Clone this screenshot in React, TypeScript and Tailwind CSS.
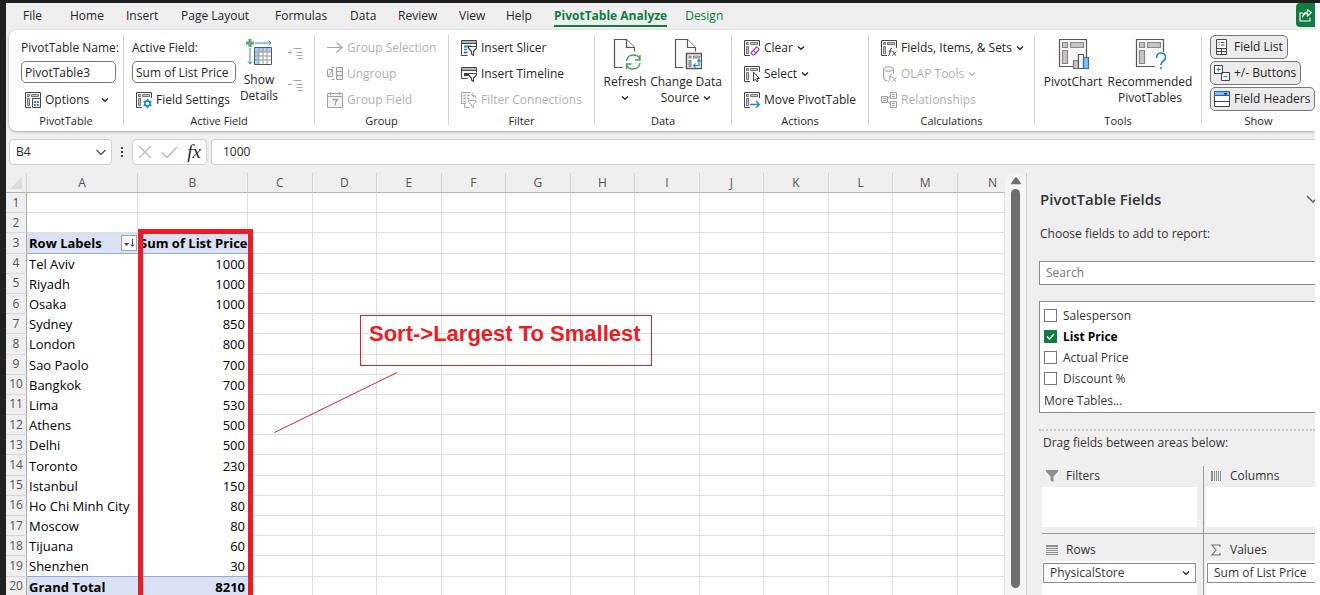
import React from "react";

type Kids = { children?: React.ReactNode };

const tabs = [
  { label: "File", cls: "w-[47px]" },
  { label: "Home", cls: "w-[56px]" },
  { label: "Insert", cls: "w-[55px]" },
  { label: "Page Layout", cls: "w-[94px]" },
  { label: "Formulas", cls: "w-[75px]" },
  { label: "Data", cls: "w-[48px]" },
  { label: "Review", cls: "w-[61px]" },
  { label: "View", cls: "w-[47px]" },
  { label: "Help", cls: "w-[48px]" },
];

const columns = ["C", "D", "E", "F", "G", "H", "I", "J", "K", "L", "M"];

const rows: [string, string][] = [
  ["", ""],
  ["", ""],
  ["Row Labels", "Sum of List Price"],
  ["Tel Aviv", "1000"],
  ["Riyadh", "1000"],
  ["Osaka", "1000"],
  ["Sydney", "850"],
  ["London", "800"],
  ["Sao Paolo", "700"],
  ["Bangkok", "700"],
  ["Lima", "530"],
  ["Athens", "500"],
  ["Delhi", "500"],
  ["Toronto", "230"],
  ["Istanbul", "150"],
  ["Ho Chi Minh City", "80"],
  ["Moscow", "80"],
  ["Tijuana", "60"],
  ["Shenzhen", "30"],
  ["Grand Total", "8210"],
];

const fields = [
  { name: "Salesperson", on: false },
  { name: "List Price", on: true },
  { name: "Actual Price", on: false },
  { name: "Discount %", on: false },
];

function Chevron({ className = "" }: { className?: string }) {
  return (
    <svg className={"h-2 w-2 shrink-0 " + className} viewBox="0 0 8 8" fill="none" stroke="currentColor" strokeWidth="1.3">
      <path d="M1 2.5 4 5.3 7 2.5" />
    </svg>
  );
}

function Icon({ children }: Kids) {
  return (
    <svg className="h-4 w-4 shrink-0" viewBox="0 0 16 16" fill="none" stroke="#444" strokeWidth="1" aria-hidden="true">
      {children}
    </svg>
  );
}

function PivotBase() {
  return (
    <>
      <path d="M6 15.5H.5V.5h15V6" fill="#fafafa" />
      <path d="M2.5 2.5h2v2h-2zM6.5 2.5h7v2h-7zM2.5 6.5h2v7h-2z" fill="#c8c6c4" stroke="#777" />
    </>
  );
}

const OptionsIcon = () => (
  <Icon>
    <PivotBase />
    <path d="M7.5 6.5h8v9h-8z" fill="#fff" />
    <path d="M9 9h2v2H9zM12 9h2v2h-2zM9 12h2v2H9zM12 12h2v2h-2z" fill="#1e88d8" stroke="none" />
  </Icon>
);
const SettingsIcon = () => (
  <Icon>
    <PivotBase />
    <circle cx="11.5" cy="11.5" r="2.6" fill="#fff" stroke="#1e88d8" strokeWidth="1.6" />
    <path d="M11.5 7v2M11.5 14v2M7.6 9.2l1.8 1M13.6 12.8l1.8 1M7.6 13.8l1.8-1M13.6 10.2l1.8-1" stroke="#1e88d8" strokeWidth="1.8" />
  </Icon>
);
const ClearIcon = () => (
  <Icon>
    <PivotBase />
    <path d="M7.5 12.2 12 7.6q.8-.7 1.6 0l1 1q.7.8 0 1.6L10.2 14.8q-.7.6-1.4 0L7.5 13.6q-.6-.7 0-1.4z" fill="#fff" stroke="#a43db0" strokeWidth="1.3" />
    <path d="m9.4 10.4 2.8 2.8" stroke="#a43db0" strokeWidth="1.2" />
  </Icon>
);
const SelectIcon = () => (
  <Icon>
    <PivotBase />
    <path d="M9.5 6v9l2-2 1.4 2.8 1.3-.7-1.3-2.6h2.6z" fill="#fff" />
  </Icon>
);
const MoveIcon = () => (
  <Icon>
    <PivotBase />
    <path d="M6 12.5h9M12 9l3.3 3.5L12 16" stroke="#1e88d8" strokeWidth="1.3" />
  </Icon>
);
const Fx = () => (
  <path d="M7 15.5q1.2.3 1.5-1.2l1-4.8q.3-1.5 1.7-1.2M7.8 11h3M11.3 11.5q1-.6 1.4.6l.8 2.4q.4 1.2 1.5.5M15.5 11.4l-4.3 4" />
);
const FieldsIcon = () => (
  <Icon>
    <PivotBase />
    <path d="M8 6.5h7.5V15H8z" fill="#fff" stroke="none" />
    <Fx />
    <path d="M15.5 1v7" />
  </Icon>
);
const OlapIcon = () => (
  <Icon>
    <g stroke="#a6a6a6">
      <path d="M2.5 3v9.5q0 2 4 2.5M12.5 3v5" fill="#eee" />
      <ellipse cx="7.5" cy="3" rx="5" ry="2.3" fill="#eee" />
      <Fx />
    </g>
  </Icon>
);
const RelationIcon = () => (
  <Icon>
    <g stroke="#a0a0a0">
      <path d="M.5 4.5h6v6h-6zM9.5.5h6v6h-6zM9.5 9.5h6v6h-6z" fill="#f4f4f4" />
      <path d="M2 6.5h3M2 8.5h3M11 2.5h3M11 4.5h3M11 11.5h3M11 13.5h3M6.5 6.5 9.5 4M6.5 9.5l3 2.5" />
    </g>
  </Icon>
);
const ArrowIcon = () => (
  <Icon>
    <path d="M0 7.5h15M9.500 2.500l5.500 5-5.500 5" stroke="#a6a6a6" strokeWidth="1.2" />
  </Icon>
);
const UngroupIcon = () => (
  <Icon>
    <g stroke="#a0a0a0">
      <path d="M.5 3.500h5v7h-5zM1 10l4.500-6M7.500 1.500h-3M7.500 13.500h-3" />
      <path d="M9.500 1.500h6v12h-6zM9.500 5.500h6M9.500 9.500h6" fill="#eee" />
    </g>
  </Icon>
);
const CalendarIcon = () => (
  <Icon>
    <g stroke="#a0a0a0">
      <path d="M.5 1.500h15v14H.5z" fill="#f4f4f4" />
      <path d="M.5 4.500h15M3.500 0v3M12.500 0v3" />
      <path d="M5.500 7.500h5q-2.500 2.500-2.500 6" strokeWidth="1.3" />
    </g>
  </Icon>
);
const SlicerIcon = () => (
  <Icon>
    <path d="M6.500 15.500H.5V.5h15V6" fill="#fff" />
    <path d="M1 1h14v2.500H1z" fill="#b5b3b1" stroke="none" />
    <path d="M.5 3.500h15" />
    <path d="M3 6.500h7" stroke="#1e88d8" strokeWidth="2" />
    <path d="M3 9.500h3" stroke="#1e88d8" strokeWidth="1.5" />
    <path d="M3 12.500h3.500" strokeWidth="1.5" />
    <path d="M7.500 6.500h8v1.500l-3 3.500v4l-2-1.500v-2.500l-3-3.500z" fill="#fff" strokeWidth="1.2" />
  </Icon>
);
const TimelineIcon = () => (
  <Icon>
    <path d="M6.500 12.500h-6v-11h15v5" fill="#fff" />
    <path d="M1 2h14v2.500H1z" fill="#b5b3b1" stroke="none" />
    <path d="M.5 4.500h15" />
    <path d="M3 8.500h4" strokeWidth="3" />
    <path d="M7.500 7.500h8V9l-3 3v3.500l-2-1.500v-2l-3-3z" fill="#fff" strokeWidth="1.2" />
  </Icon>
);
const ConnectionsIcon = () => (
  <Icon>
    <g stroke="#a6a6a6">
      <path d="M5 11.500H.5V.5h9M3.500 12v3.500h5" fill="#f2f2f2" />
      <path d="M2.500 3.500h2M6.500 3.500h2M2.500 6.500h2M2.500 9.500h2M6.500 6.500h2" strokeWidth="1.4" />
      <path d="M15 6q0-3-4-3M12.500.8 10.500 3l2.500 2" />
      <path d="M7.500 8.500h7.500v1.500l-2.800 2.500v3l-1.900-1.200v-1.800l-2.800-2.500z" fill="#fff" />
    </g>
  </Icon>
);
const FieldListIcon = () => (
  <Icon>
    <path d="M2.500.5h10v15h-10z" fill="#fff" />
    <path d="M2.500 9.500h10M2.500 12.500h10M7.500 9.500v6" />
    <path d="M4.500 3.500h1M4.500 6h1M7 3.500h3.500M7 6h3.500" />
  </Icon>
);
const ButtonsIcon = () => (
  <Icon>
    <path d="M.5.5h8v8h-8zM7.500 7.500h8v8h-8z" fill="#fff" />
    <path d="M2.500 4.500h4M4.500 2.500v4M9.500 11.500h4" stroke="#1e88d8" strokeWidth="1.2" />
  </Icon>
);
const HeadersIcon = () => (
  <Icon>
    <path d="M.5.5h15v15H.5z" fill="#fff" />
    <path d="M.5.5h15v4H.5z" fill="#83beec" stroke="#1565a8" />
    <path d="M.5 10.500h15" />
    <path d="M9.500 2h4l-2 2.200z" fill="#222" stroke="none" />
  </Icon>
);

function BigIcon({ children }: Kids) {
  return (
    <svg className="h-8 w-8 shrink-0" viewBox="0 0 32 32" fill="none" stroke="#555" strokeWidth="1.2" aria-hidden="true">
      {children}
    </svg>
  );
}
const Page = () => (
  <>
    <path d="M13.500 29.500h-8v-28h12l8 8v4" fill="#fafafa" />
    <path d="M17.500 1.500v8h8" fill="#fff" />
  </>
);
const BigPivot = () => (
  <>
    <path d="M2.500 1.500h27v27h-27z" fill="#fafafa" />
    <path d="M5.500 4.500h5v5h-5zM13.500 4.500h13v5h-13zM5.500 12.500h5v13h-5z" fill="#c8c6c4" stroke="#888" />
  </>
);

function Cmd({ icon, label, menu, off }: { icon: React.ReactNode; label: string; menu?: boolean; off?: boolean }) {
  return (
    <button
      type="button"
      disabled={off}
      className={"flex h-[26px] items-center gap-1 whitespace-nowrap " + (off ? "text-[#b1b1b1]" : "text-[#262626]")}
    >
      {icon}
      <span>{label}</span>
      {menu && <Chevron />}
    </button>
  );
}

function Group({ label, className, body, last }: { label: string; className: string; body: React.ReactNode; last?: boolean }) {
  return (
    <>
      <section aria-label={label} className={"flex shrink-0 flex-col " + className}>
        <div className="flex h-[78px]">{body}</div>
        <div className="text-center text-[11px] leading-[15px]">{label}</div>
      </section>
      {!last && <div className="h-[90px] w-px shrink-0 bg-[#d4d4d4]" />}
    </>
  );
}

function Toggle({ icon, label }: { icon: React.ReactNode; label: string }) {
  return (
    <button type="button" aria-pressed="true" className="flex h-6 items-center gap-1 whitespace-nowrap rounded-[5px] border border-[#777] bg-[#ebebeb] pr-1 pl-[3px]">
      {icon}
      {label}
    </button>
  );
}

function Ribbon() {
  return (
    <div className="ml-[3px] flex h-[101px] shrink-0 overflow-hidden rounded-l-lg bg-white pt-[5px] text-[#262626] shadow-[0_1px_3px_rgba(0,0,0,0.3)]">
      <Group
        label="PivotTable"
        className="w-[114px]"
        body={
          <div className="flex flex-col pl-3">
            <label htmlFor="pt-name" className="whitespace-nowrap leading-[26px]">PivotTable Name:</label>
            <input id="pt-name" defaultValue="PivotTable3" className="mb-1 h-[22px] w-[95px] rounded-[5px] border border-[#777] px-[3px]" />
            <button type="button" className="flex h-[26px] items-center gap-1 pl-1">
              <OptionsIcon />
              <span>Options</span>
              <Chevron className="ml-2" />
            </button>
          </div>
        }
      />
      <Group
        label="Active Field"
        className="w-[190px]"
        body={
          <>
            <div className="flex w-[112px] shrink-0 flex-col pl-2">
              <label htmlFor="af-name" className="leading-[26px]">Active Field:</label>
              <input id="af-name" defaultValue="Sum of List Price" className="mb-1 h-[22px] w-full rounded-[5px] border border-[#777] px-[3px]" />
              <div className="pl-1"><Cmd icon={<SettingsIcon />} label="Field Settings" /></div>
            </div>
            <button type="button" className="flex w-[46px] shrink-0 flex-col items-center pt-[3px] leading-4">
              <svg className="mb-[6px] h-[28px] w-[28px] shrink-0" viewBox="0 0 28 28" fill="none">
                <path d="M5 1v8M1 5h8" stroke="#5aa876" strokeWidth="3" />
                <path d="M10 5h15M23.500 3l2.500 2-2.500 2M5 10v15M3 23.500 5 26l2-2.500" stroke="#2a8ad4" />
                <path d="M9.500 9.500h17v17h-17z" fill="#fff" stroke="#555" />
                <path d="M10 10h16v4H10zM10 14h4v12h-4z" fill="#a9d0ef" />
                <path d="M10 14h16M10 18h16M10 22h16M14 10v16M18 10v16M22 10v16" stroke="#999" />
              </svg>
              <span>Show</span>
              <span>Details</span>
            </button>
            <div className="flex w-7 flex-col items-center gap-4 pt-3">
              <button type="button" aria-label="Expand field" disabled>
                <Icon><path d="M0 5.500h4M2 3.500v4M5.500 1.500h8M8.500 5.500h6M8.500 8.500h6M10 11.500h5" stroke="#a6a6a6" /></Icon>
              </button>
              <button type="button" aria-label="Collapse field" disabled>
                <Icon><path d="M0 5.500h4M5.500 1.500h8M8.500 5.500h6M8.500 8.500h6M10 11.500h5" stroke="#a6a6a6" /></Icon>
              </button>
            </div>
          </>
        }
      />
      <Group
        label="Group"
        className="w-[133px]"
        body={
          <div className="flex flex-col pl-3">
            <Cmd off icon={<ArrowIcon />} label="Group Selection" />
            <Cmd off icon={<UngroupIcon />} label="Ungroup" />
            <Cmd off icon={<CalendarIcon />} label="Group Field" />
          </div>
        }
      />
      <Group
        label="Filter"
        className="w-[145px]"
        body={
          <div className="flex flex-col pl-3">
            <Cmd icon={<SlicerIcon />} label="Insert Slicer" />
            <Cmd icon={<TimelineIcon />} label="Insert Timeline" />
            <Cmd off icon={<ConnectionsIcon />} label="Filter Connections" />
          </div>
        }
      />
      <Group
        label="Data"
        className="w-[136px]"
        body={
          <>
            <button type="button" className="flex w-[60px] shrink-0 flex-col items-center pt-[3px] leading-4">
              <BigIcon>
                <Page />
                <path d="M16 16h16v15H16z" fill="#fff" stroke="none" />
                <path d="M17.500 23q1-6 7-6 5 0 6.500 4.500M31 17v5h-5M31 25q-1 6-7 6-5 0-6.500-4.500M17.500 31v-5h5" stroke="#3fa556" strokeWidth="1.4" />
              </BigIcon>
              <span className="mt-1">Refresh</span>
              <Chevron className="mt-1" />
            </button>
            <button type="button" className="flex w-[62px] shrink-0 flex-col items-center pt-[3px] leading-4">
              <BigIcon>
                <Page />
                <path d="M16.500 15.500h15v15h-15z" fill="#fff" strokeWidth="1.5" />
                <path d="M19 18h2v2h-2zM23.500 18h6v2h-6zM19 22.500h2v6h-2z" fill="#c8c6c4" stroke="#888" />
                <path d="M29 22v5.500h-5M27.300 23.500 29 21.500l1.500 2M25.500 25.500l-2 2 2 2" stroke="#1e88d8" />
              </BigIcon>
              <span className="mt-1 whitespace-nowrap">Change Data</span>
              <span className="flex items-center gap-1">Source <Chevron /></span>
            </button>
          </>
        }
      />
      <Group
        label="Actions"
        className="w-[136px]"
        body={
          <div className="flex flex-col pl-3">
            <Cmd icon={<ClearIcon />} label="Clear" menu />
            <Cmd icon={<SelectIcon />} label="Select" menu />
            <Cmd icon={<MoveIcon />} label="Move PivotTable" />
          </div>
        }
      />
      <Group
        label="Calculations"
        className="w-[165px]"
        body={
          <div className="flex flex-col pl-3">
            <Cmd icon={<FieldsIcon />} label="Fields, Items, & Sets" menu />
            <Cmd off icon={<OlapIcon />} label="OLAP Tools" menu />
            <Cmd off icon={<RelationIcon />} label="Relationships" />
          </div>
        }
      />
      <Group
        label="Tools"
        className="w-[166px]"
        body={
          <>
            <button type="button" className="flex w-[76px] shrink-0 flex-col items-center pt-[3px] leading-4">
              <BigIcon>
                <BigPivot />
                <path d="M16.500 22.500h5v8h-5z" fill="#c8c6c4" stroke="#777" />
                <path d="M21.500 16.500h5v14h-5z" fill="#fff" />
                <path d="M26.500 19.500h5v11h-5z" fill="#83beec" stroke="#1e74bd" />
              </BigIcon>
              <span className="mt-1">PivotChart</span>
            </button>
            <button type="button" className="flex w-[78px] shrink-0 flex-col items-center pt-[3px] leading-4">
              <BigIcon>
                <BigPivot />
                <path d="M21 14h11v18H21z" fill="#fff" stroke="none" />
                <path d="M22.500 20q.2-5 4.500-5t4.500 4q0 2.500-2.500 4.300-2 1.500-2 3.700M27 29v2" stroke="#1e88d8" strokeWidth="1.7" />
              </BigIcon>
              <span className="mt-1">Recommended</span>
              <span>PivotTables</span>
            </button>
          </>
        }
      />
      <Group
        last
        label="Show"
        className="w-[113px]"
        body={
          <div className="flex flex-col items-start gap-[2px] pl-2">
            <Toggle icon={<FieldListIcon />} label="Field List" />
            <Toggle icon={<ButtonsIcon />} label="+/- Buttons" />
            <Toggle icon={<HeadersIcon />} label="Field Headers" />
          </div>
        }
      />
    </div>
  );
}

function FormulaBar() {
  return (
    <div className="ml-[3px] mt-2 flex h-[26px] shrink-0 items-stretch text-[#262626]">
      <div className="flex w-[103px] items-center rounded-[4px] border border-[#d0d0d0] bg-white pl-[6px]">
        <input aria-label="Name box" defaultValue="B4" className="w-[79px] bg-transparent" />
        <button type="button" aria-label="Open name list">
          <svg className="h-3 w-3" viewBox="0 0 12 12" fill="none" stroke="#444" strokeWidth="1.2"><path d="M1.500 4 6 8.500 10.500 4" /></svg>
        </button>
      </div>
      <svg className="w-5" viewBox="0 0 20 26" fill="#444"><path d="M9 8h2v2H9zM9 12h2v2H9zM9 16h2v2H9z" /></svg>
      <div className="flex w-[75px] items-center justify-between rounded-[4px] border border-[#d0d0d0] bg-white px-[5px]">
        <button type="button" aria-label="Cancel" disabled>
          <svg className="h-[14px] w-[14px]" viewBox="0 0 14 14" stroke="#b8b8b8" strokeWidth="1.2"><path d="m1 1 12 12M13 1 1 13" /></svg>
        </button>
        <button type="button" aria-label="Enter" disabled>
          <svg className="h-[14px] w-[17px]" viewBox="0 0 17 14" fill="none" stroke="#b8b8b8" strokeWidth="1.3"><path d="m1 7.500 5 5L16 2" /></svg>
        </button>
        <button type="button" className="font-['Liberation_Serif',serif] text-[19px] leading-5 italic">fx</button>
      </div>
      <input aria-label="Formula bar" defaultValue="1000" className="ml-1 min-w-0 flex-1 rounded-l-[4px] border border-r-0 border-[#d0d0d0] bg-white pl-[11px]" />
    </div>
  );
}

const line = "border-r border-b border-[#e0e0e0] ";

function Sheet() {
  return (
    <div className="relative min-w-0 flex-1 overflow-hidden">
      <table className="h-[calc(100%+2px)] w-full table-fixed border-separate border-spacing-0 bg-white text-[13px] leading-[18px] text-black">
        <colgroup>
          <col className="w-[21px]" />
          <col className="w-[111px]" />
          <col className="w-[110px]" />
          {columns.map((c) => <col key={c} />)}
          <col className="w-[47px]" />
        </colgroup>
        <thead>
          <tr className="h-5 bg-[#efefef] text-[12px] text-[#555]">
            <th className="border-r border-b border-[#b4b4b4] border-r-[#d4d4d4] p-0">
              <svg className="ml-auto mr-1 h-3 w-3" viewBox="0 0 12 12" fill="#dcdcdc"><path d="M12 0v12H0z" /></svg>
            </th>
            {["A", "B", ...columns].map((c) => (
              <th key={c} className="border-r border-b border-[#b4b4b4] border-r-[#d4d4d4] p-0 font-normal">{c}</th>
            ))}
            <th className="border-b border-[#b4b4b4] p-0 pr-2 text-right font-normal">N</th>
          </tr>
        </thead>
        <tbody>
          {rows.map(([a, b], i) => {
            const head = i === 2;
            const total = i === 19;
            const tone = head || total ? "bg-[#d9e1f2] font-bold " : "";
            const rule = head || i === 18 ? "border-b border-[#8ea9db] " : i > 2 ? "" : line;
            return (
              <tr key={i}>
                <th className="border-r border-b border-[#d8d8d8] border-r-[#a8a8a8] bg-[#efefef] p-0 text-center text-[12px] font-normal text-[#555]">{i + 1}</th>
                <td className={"p-0 pl-[2px] whitespace-nowrap " + tone + rule}>
                  {head ? (
                    <div className="flex items-center justify-between">
                      {a}
                      <button type="button" aria-label="Sort and filter" className="mr-px flex h-4 w-4 items-center justify-center border border-[#a6a6a6] bg-[#fafafa]">
                        <svg className="h-3 w-3" viewBox="0 0 12 12" fill="none" stroke="#444"><path d="M9.500 2v7M8 7.500l1.500 2 1.500-2" /><path d="M1 6h5L3.500 9z" fill="#444" stroke="none" /></svg>
                      </button>
                    </div>
                  ) : a}
                </td>
                <td className={"p-0 whitespace-nowrap " + (head ? "pl-[2px] " : "pr-[3px] text-right ") + tone + rule}>{b}</td>
                {columns.map((c) => <td key={c} className={line + "p-0"} />)}
                <td className={line + "p-0"} />
              </tr>
            );
          })}
        </tbody>
      </table>
      <div className="absolute top-[56px] -bottom-3 left-[132px] w-[115px] border-[5px] border-[#ed1c24]" />
      <div className="absolute top-[142px] left-[354px] h-[51px] w-[292px] border border-[#ed1c24] px-2 py-[5px] font-['Liberation_Sans',sans-serif] text-[22px] leading-[26px] font-bold whitespace-nowrap text-[#ed1c24]">
        Sort-&gt;Largest To Smallest
      </div>
      <svg className="absolute top-[199px] left-[268px] h-[62px] w-[124px]" viewBox="0 0 124 62" stroke="#ed1c24"><path d="M.5 60.500 123 .5" /></svg>
    </div>
  );
}

function ScrollBar() {
  return (
    <div className="flex w-[21px] shrink-0 flex-col items-center rounded-t-lg bg-[#f5f5f5] pb-[7px]">
      <svg className="mt-1 h-2 w-3" viewBox="0 0 12 8" fill="#6e6e6e"><path d="M5.200.6q.8-.8 1.600 0L11 6.300q.3 1-.6 1H1.600q-.9 0-.6-1z" /></svg>
      <div className="mt-1 w-[9px] flex-1 rounded-full bg-[#6e6e6e]" />
    </div>
  );
}

function Area({ icon, label, value }: { icon: React.ReactNode; label: string; value?: string }) {
  return (
    <div className="flex min-w-0 flex-1 flex-col">
      <div className="flex h-[20px] items-center gap-2 pl-1">
        <svg className="h-3 w-3 shrink-0" viewBox="0 0 12 12" aria-hidden="true">{icon}</svg>
        <span>{label}</span>
      </div>
      <div className="mt-[1px] min-h-[40px] flex-1 bg-white px-px pt-[2px]">
        {value && (
          <div className="relative flex items-center">
            <select aria-label={label} className="h-5 w-full appearance-none border border-[#8a8a8a] bg-white pl-[6px]">
              <option>{value}</option>
            </select>
            <Chevron className="pointer-events-none absolute right-[6px]" />
          </div>
        )}
      </div>
    </div>
  );
}

function FieldPane() {
  return (
    <aside className="flex w-[289px] shrink-0 flex-col overflow-hidden border-l border-[#cfcfcf] pl-3 text-[#333]">
      <div className="mt-[15px] flex items-center justify-between pl-[1px]">
        <h2 className="text-[15px] leading-[22px] font-semibold">PivotTable Fields</h2>
        <button type="button" aria-label="Pane options" className="-mr-[5px]">
          <svg className="h-3 w-[14px]" viewBox="0 0 14 12" fill="none" stroke="#555" strokeWidth="1.3"><path d="m1 3 6 6 6-6" /></svg>
        </button>
      </div>
      <p className="mt-4 pl-[1px] leading-4">Choose fields to add to report:</p>
      <input aria-label="Search" placeholder="Search" className="mt-[19px] h-6 shrink-0 border border-r-0 border-[#8a8a8a] bg-white px-[6px] pb-[2px] placeholder:text-[#767676]" />
      <div className="mt-4 flex shrink-0 flex-col border border-r-0 border-[#8a8a8a] bg-white pt-[3px] pl-1">
        {fields.map((f) => (
          <label key={f.name} className={"relative flex h-[21px] items-center gap-[6px] " + (f.on ? "font-bold text-black" : "")}>
            <input type="checkbox" defaultChecked={f.on} className="peer h-[13px] w-[13px] appearance-none border border-[#777] bg-white checked:border-[#107c41] checked:bg-[#107c41]" />
            <svg className="pointer-events-none absolute left-0 hidden h-[13px] w-[13px] peer-checked:block" viewBox="0 0 13 13" fill="none" stroke="#fff" strokeWidth="1.4"><path d="M3 6.500 5.500 9 10 4" /></svg>
            {f.name}
          </label>
        ))}
        <a href="#tables" className="pt-[1px] leading-[22px]">More Tables...</a>
      </div>
      <div className="mt-4 h-px shrink-0 border-t-2 border-dotted border-[#c9c9c9]" />
      <p className="mt-1 pl-1 leading-4">Drag fields between areas below:</p>
      <div className="mt-[15px] ml-[3px] flex min-h-0 flex-1">
        <div className="flex w-[162px] shrink-0 flex-col border-r border-[#9a9a9a]">
          <div className="flex border-b border-[#9a9a9a] pr-[6px] pb-[6px]">
            <Area label="Filters" icon={<path d="M0 0h12v1.500L7.500 6.500V12l-3-1.500v-4L0 1.500z" fill="#8f8f8f" />} />
          </div>
          <div className="mt-[6px] flex flex-1 pr-[6px]">
            <Area label="Rows" value="PhysicalStore" icon={<><path d="M0 1h12v2H0z" fill="#8f8f8f" /><path d="M0 4.500h12M0 6.500h12M0 8.500h12M0 10.500h12" stroke="#8f8f8f" /></>} />
          </div>
        </div>
        <div className="flex min-w-0 flex-1 flex-col">
          <div className="flex border-b border-[#9a9a9a] pb-[6px] pl-[2px]">
            <Area label="Columns" icon={<><path d="M1 1h2v10H1z" fill="#8f8f8f" /><path d="M4.500 1v10M6.500 1v10M8.500 1v10M10.500 1v10" stroke="#8f8f8f" /></>} />
          </div>
          <div className="-mr-[30px] mt-[6px] flex flex-1 pl-[2px]">
            <Area label="Values" value="Sum of List Price" icon={<path d="M10 3V1H2l4 5-4 5h8V9" fill="none" stroke="#777" strokeWidth="1.2" />} />
          </div>
        </div>
      </div>
    </aside>
  );
}

export default function App() {
  return (
    <div className="flex h-screen flex-col overflow-hidden bg-[#202020] pt-[3px] font-['Open_Sans','Noto_Sans',sans-serif] text-[12px] leading-4">
      <div className="ml-[6px] flex min-h-0 flex-1 flex-col overflow-hidden border-r-[5px] border-white bg-[#efefef]">
        <nav className="flex h-[27px] shrink-0 items-start pl-[17px] text-[#262626]">
          {tabs.map((t) => (
            <button key={t.label} type="button" className={"shrink-0 text-left leading-[26px] whitespace-nowrap " + t.cls}>{t.label}</button>
          ))}
          <button type="button" className="h-6 border-b-2 border-[#107c41] pt-[2px] leading-[22px] font-bold whitespace-nowrap text-[#107c41]">PivotTable Analyze</button>
          <button type="button" className="ml-[18px] leading-[26px] text-[#107c41]">Design</button>
          <button type="button" aria-label="Share" className="ml-auto flex h-6 w-[19px] items-center justify-center rounded-l-[4px] bg-[#107c41]">
            <svg className="h-[13px] w-[13px]" viewBox="0 0 13 13" fill="none" stroke="#fff" strokeWidth="1.1"><path d="M4 4H1v8h10V8.500M3.500 8.500Q4 4.500 8.500 4.500V7L12.300 3.700 8.500.7V3Q4 3 3.500 8.500z" /></svg>
          </button>
        </nav>
        <Ribbon />
        <FormulaBar />
        <div className="mt-2 flex min-h-0 flex-1">
          <Sheet />
          <ScrollBar />
          <FieldPane />
        </div>
      </div>
    </div>
  );
}
